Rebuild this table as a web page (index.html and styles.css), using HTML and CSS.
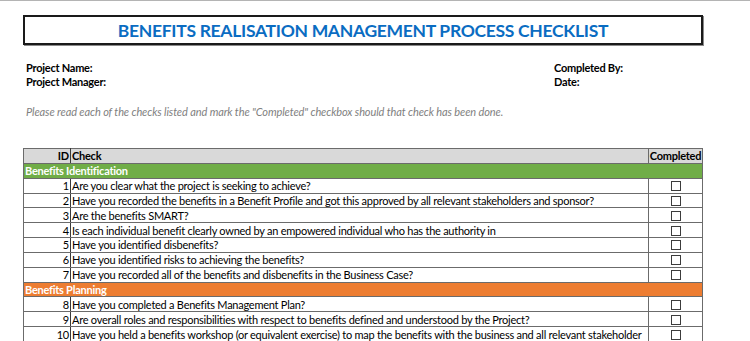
FILE: index.html
```html
<!DOCTYPE html>
<html lang="en">
<head>
<meta charset="utf-8">
<title>Benefits Realisation Management Process Checklist</title>
<link rel="stylesheet" href="styles.css">
</head>
<body>
<div class="sheet">
  <header class="title-box">
    <h1 class="title">BENEFITS REALISATION MANAGEMENT PROCESS CHECKLIST</h1>
  </header>

  <section class="details">
    <div class="details-col">
      <div class="label">Project Name:</div>
      <div class="label">Project Manager:</div>
    </div>
    <div class="details-col details-right">
      <div class="label">Completed By:</div>
      <div class="label">Date:</div>
    </div>
  </section>

  <p class="note">Please read each of the checks listed and mark the "Completed" checkbox should that check has been done.</p>

  <table class="checklist">
    <colgroup>
      <col class="col-id">
      <col class="col-check">
      <col class="col-done">
    </colgroup>
    <thead>
      <tr class="head-row">
        <th class="cell-id">ID</th>
        <th class="cell-check">Check</th>
        <th class="cell-done">Completed</th>
      </tr>
    </thead>
    <tbody>
      <tr class="section section-green"><td colspan="3">Benefits Identification</td></tr>
      <tr><td class="cell-id">1</td><td class="cell-check">Are you clear what the project is seeking to achieve?</td><td class="cell-done"><span class="box"></span></td></tr>
      <tr><td class="cell-id">2</td><td class="cell-check">Have you recorded the benefits in a Benefit Profile and got this approved by all relevant stakeholders and sponsor?</td><td class="cell-done"><span class="box"></span></td></tr>
      <tr><td class="cell-id">3</td><td class="cell-check">Are the benefits SMART?</td><td class="cell-done"><span class="box"></span></td></tr>
      <tr><td class="cell-id">4</td><td class="cell-check">Is each individual benefit clearly owned by an empowered individual who has the authority in</td><td class="cell-done"><span class="box"></span></td></tr>
      <tr><td class="cell-id">5</td><td class="cell-check">Have you identified disbenefits?</td><td class="cell-done"><span class="box"></span></td></tr>
      <tr><td class="cell-id">6</td><td class="cell-check">Have you identified risks to achieving the benefits?</td><td class="cell-done"><span class="box"></span></td></tr>
      <tr><td class="cell-id">7</td><td class="cell-check">Have you recorded all of the benefits and disbenefits in the Business Case?</td><td class="cell-done"><span class="box"></span></td></tr>
      <tr class="section section-orange"><td colspan="3">Benefits Planning</td></tr>
      <tr><td class="cell-id">8</td><td class="cell-check">Have you completed a Benefits Management Plan?</td><td class="cell-done"><span class="box"></span></td></tr>
      <tr><td class="cell-id">9</td><td class="cell-check">Are overall roles and responsibilities with respect to benefits defined and understood by the Project?</td><td class="cell-done"><span class="box"></span></td></tr>
      <tr><td class="cell-id">10</td><td class="cell-check">Have you held a benefits workshop (or equivalent exercise) to map the benefits with the business and all relevant stakeholder</td><td class="cell-done"><span class="box"></span></td></tr>
    </tbody>
  </table>
</div>
</body>
</html>
```
FILE: styles.css
```css
html, body {
  margin: 0;
  padding: 0;
  background: #ffffff;
}

body {
  font-family: Lato, "Liberation Sans", sans-serif;
  font-size: 11px;
  letter-spacing: -0.25px;
  color: #000000;
  border-top: 1px solid #b4b4b4;
  overflow: hidden;
  height: 340px;
}

.sheet {
  padding: 14px 0 0 23px;
  width: 680px;
}

/* title banner */
.title-box {
  height: 26px;
  border: 2px solid #1a1a1a;
  box-shadow: 1px 1px 0 #8a8a8a;
  display: flex;
  align-items: center;
  justify-content: center;
}

.title {
  margin: 0;
  font-size: 17.5px;
  font-weight: 700;
  color: #0a6cc2;
  letter-spacing: -0.3px;
}

/* project details */
.details {
  display: flex;
  padding: 16px 0 0 3px;
}

.details-col {
  width: 528px;
}

.details-right {
  width: auto;
}

.label {
  font-weight: 700;
  line-height: 14px;
  height: 14px;
}

/* instructions */
.note {
  margin: 16px 0 0 3px;
  font-style: italic;
  color: #7f7f7f;
  line-height: 14px;
  letter-spacing: -0.1px;
}

/* checklist table */
.checklist {
  margin-top: 29px;
  width: 680px;
  border-collapse: collapse;
  table-layout: fixed;
  border: 1px solid #4d4d4d;
}

.col-id { width: 47px; }
.col-done { width: 54px; }

.checklist th,
.checklist td {
  border: 1px solid #6b6b6b;
  height: 13.85px;
  padding: 0 1px;
  line-height: 13px;
  white-space: nowrap;
  overflow: hidden;
}

.head-row th {
  background: #d9d9d9;
  font-weight: 700;
  text-align: left;
}

.checklist .cell-id {
  text-align: right;
  border-right: 1px solid #3a3a3a;
}

.checklist .cell-done {
  text-align: center;
  border-left: 1px solid #3a3a3a;
  padding: 0;
}

.section td {
  color: #ffffff;
  font-weight: 700;
  padding-left: 1px;
}

.section-green td {
  background: #70ad47;
}

.section-orange td {
  background: #ed7d31;
}

.box {
  display: inline-block;
  width: 8px;
  height: 8px;
  border: 1px solid #3c3c3c;
  vertical-align: -1px;
}
```
